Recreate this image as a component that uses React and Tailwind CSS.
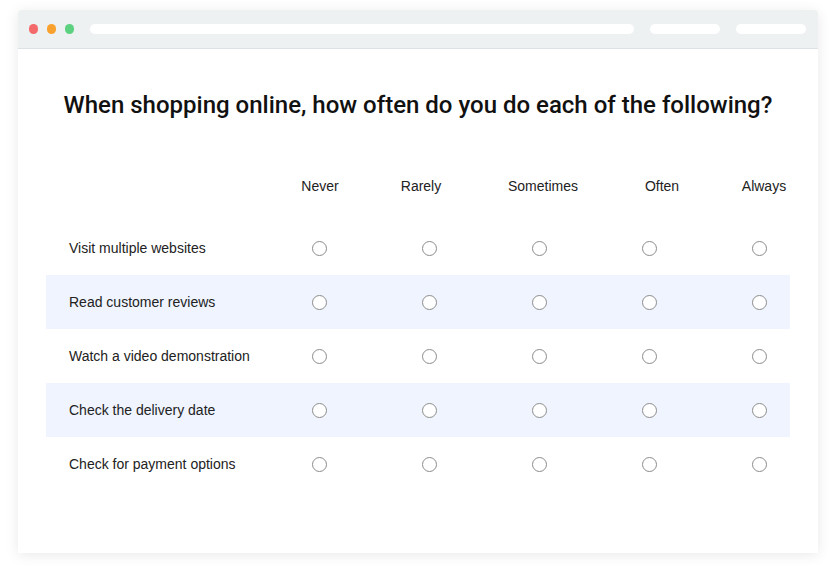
import React from "react";

const options = ["Never", "Rarely", "Sometimes", "Often", "Always"];

// header labels don't sit exactly over the radios in the original
const headerPad = ["pl-[2px]", "pr-[16px]", "pl-[8px]", "pl-[26px]", "pl-[10px]"];

const questions = [
  "Visit multiple websites",
  "Read customer reviews",
  "Watch a video demonstration",
  "Check the delivery date",
  "Check for payment options",
];

function Radio() {
  return (
    <span className="block w-[15px] h-[15px] rounded-full border border-[#8c8c8c] bg-white" />
  );
}

export default function App() {
  return (
    <div className="w-[837px] h-[575px] bg-white pt-[10px] px-[18px]">
      <div className="w-[800px] h-[543px] bg-white rounded-t-[4px] shadow-[0_2px_14px_rgba(0,0,0,0.09)] flex flex-col">
        {/* browser chrome */}
        <div className="h-[39px] bg-[#edf1f2] border-b border-[#dde2e4] rounded-t-[4px] flex items-center pl-[11px] pr-[11px]">
          <div className="flex gap-[9px]">
            <span className="w-[9px] h-[10px] rounded-full bg-[#f46a6a]" />
            <span className="w-[9px] h-[10px] rounded-full bg-[#f9a12e]" />
            <span className="w-[9px] h-[10px] rounded-full bg-[#5cd17f]" />
          </div>
          <div className="ml-[16px] w-[544px] h-[10px] rounded-full bg-white" />
          <div className="ml-[16px] w-[70px] h-[10px] rounded-full bg-white" />
          <div className="ml-[16px] w-[70px] h-[10px] rounded-full bg-white" />
        </div>

        <div className="px-[28px] font-['Liberation_Sans',Arial,sans-serif] text-[14px] text-[#222]">
          <h1 className="mt-[41px] text-center font-['Roboto',sans-serif] font-medium text-[24px] leading-[30px] text-[#111]">
            When shopping online, how often do you do each of the following?
          </h1>

          <div className="mt-[56px] grid grid-cols-[218px_repeat(5,110px)] h-[20px] items-center">
            <div />
            {options.map((o, i) => (
              <div key={o} className={"text-center " + headerPad[i]}>
                {o}
              </div>
            ))}
          </div>

          <div className="mt-[25px] flex flex-col">
            {questions.map((q, i) => (
              <div
                key={q}
                className={
                  "w-full h-[54px] grid grid-cols-[218px_repeat(5,110px)] items-center " +
                  (i % 2 === 1 ? "bg-[#eff4ff]" : "")
                }
              >
                <div className="pl-[23px]">{q}</div>
                {options.map((o) => (
                  <div key={o} className="flex justify-center">
                    <Radio />
                  </div>
                ))}
              </div>
            ))}
          </div>
        </div>
      </div>
    </div>
  );
}
